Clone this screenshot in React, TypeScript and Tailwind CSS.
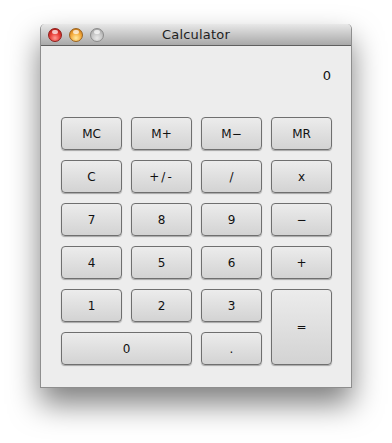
const keys: { label: string; span?: string }[] = [
  { label: 'MC' },
  { label: 'M+' },
  { label: 'M−' },
  { label: 'MR' },
  { label: 'C' },
  { label: '+/-', span: 'tracking-[2px]' },
  { label: '/' },
  { label: 'x' },
  { label: '7' },
  { label: '8' },
  { label: '9' },
  { label: '−' },
  { label: '4' },
  { label: '5' },
  { label: '6' },
  { label: '+' },
  { label: '1' },
  { label: '2' },
  { label: '3' },
  { label: '=', span: 'row-span-2' },
  { label: '0', span: 'col-span-2' },
  { label: '.' },
];

function Light({ color }: { color: 'red' | 'orange' | 'gray' }) {
  const fill =
    color === 'red'
      ? 'bg-[radial-gradient(circle_at_50%_75%,#ff9a92_0%,#e9403a_45%,#a5110c_100%)] border-[#8f1d1a]'
      : color === 'orange'
        ? 'bg-[radial-gradient(circle_at_50%_75%,#ffeaa0_0%,#f4a93a_50%,#b8660c_100%)] border-[#9a6420]'
        : 'bg-[radial-gradient(circle_at_50%_75%,#e8e8e8_0%,#c4c4c4_50%,#9a9a9a_100%)] border-[#8c8c8c]';
  return (
    <div className={`relative w-[14px] h-[14px] rounded-full border ${fill}`}>
      <div className="absolute left-[3px] top-[1px] w-[6px] h-[4px] rounded-full bg-white/70" />
    </div>
  );
}

export default function App() {
  return (
    <div className="w-[392px] h-[443px] bg-white pt-[24px] pl-[40px] font-['DejaVu_Sans',sans-serif]">
      <div className="w-[312px] h-[364px] bg-[#ededed] border border-[#8e8e8e] border-t-0 rounded-t-[5px] shadow-[0_16px_30px_rgba(0,0,0,0.5)] flex flex-col">
        <div className="relative h-[22px] rounded-t-[5px] bg-gradient-to-b from-[#e8e8e8] to-[#a9a9a9] border-b border-[#5f5f5f] flex items-center justify-center">
          <div className="absolute left-[7px] top-[4px] flex gap-[7px]">
            <Light color="red" />
            <Light color="orange" />
            <Light color="gray" />
          </div>
          <span className="text-[13px] text-[#1e1e1e] tracking-[0.2px]">Calculator</span>
        </div>
        <div className="h-[58px] flex items-center justify-end pr-[20px] pt-[2px] text-[13px] text-[#111]">0</div>
        <div className="grid grid-cols-[61px_61px_61px_61px] auto-rows-[33px] gap-x-[9px] gap-y-[10px] pl-[20px] pt-[13px]">
          {keys.map((k) => (
            <button
              key={k.label}
              className={`${k.span ?? ''} rounded-[4px] border border-[#6f6f6f] bg-gradient-to-b from-[#ececec] to-[#d3d3d3] shadow-[0_1px_1px_rgba(0,0,0,0.3)] text-[12px] text-[#111] flex items-center justify-center`}
            >
              {k.label}
            </button>
          ))}
        </div>
      </div>
    </div>
  );
}
